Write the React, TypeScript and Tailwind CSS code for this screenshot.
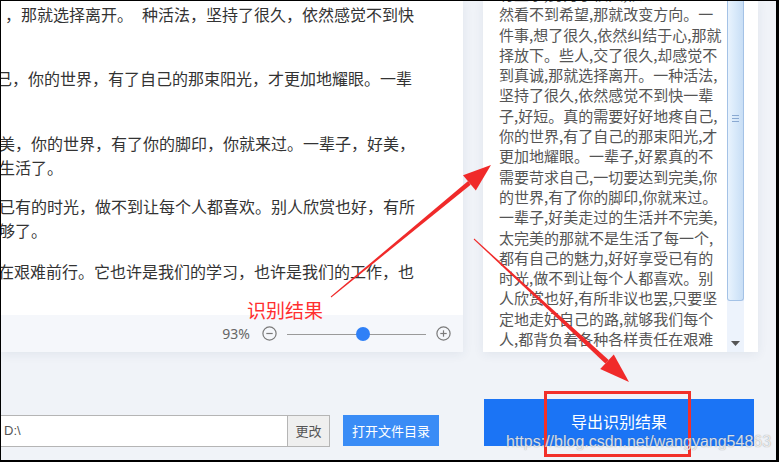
import React from "react";

const leftLines = [
  { text: "己，你的世界，有了自己的那束阳光，才更加地耀眼。一辈", cls: "mt-[40px] -ml-[5px]" },
  { text: "美，你的世界，有了你的脚印，你就来过。一辈子，好美，", cls: "mt-[41px] -ml-[2px]" },
  { text: "生活了。", cls: "-ml-[2px]" },
  { text: "已有的时光，做不到让每个人都喜欢。别人欣赏也好，有所", cls: "mt-[15px] -ml-[2px]" },
  { text: "够了。", cls: "-ml-[2px]" },
  { text: "在艰难前行。它也许是我们的学习，也许是我们的工作，也", cls: "mt-[17px] -ml-[3px]" },
];

const rightLines = [
  "有些事,努力了很久,依",
  "然看不到希望,那就改变方向。一",
  "件事,想了很久,依然纠结于心,那就",
  "择放下。些人,交了很久,却感觉不",
  "到真诚,那就选择离开。一种活法,",
  "坚持了很久,依然感觉不到快一辈",
  "子,好短。真的需要好好地疼自己,",
  "你的世界,有了自己的那束阳光,才",
  "更加地耀眼。一辈子,好累真的不",
  "需要苛求自己,一切要达到完美,你",
  "的世界,有了你的脚印,你就来过。",
  "一辈子,好美走过的生活并不完美,",
  "太完美的那就不是生活了每一个,",
  "都有自己的魅力,好好享受已有的",
  "时光,做不到让每个人都喜欢。别",
  "人欣赏也好,有所非议也罢,只要坚",
  "定地走好自己的路,就够我们每个",
  "人,都背负着各种各样责任在艰难",
];

function CircleIcon({ plus }: { plus?: boolean }) {
  return (
    <svg width="15" height="15" viewBox="0 0 15 15" className="shrink-0">
      <circle cx="7.5" cy="7.5" r="6.6" fill="none" stroke="#7a7a7a" strokeWidth="1.2" />
      <line x1="4.3" y1="7.5" x2="10.7" y2="7.5" stroke="#7a7a7a" strokeWidth="1.2" />
      {plus && <line x1="7.5" y1="4.3" x2="7.5" y2="10.7" stroke="#7a7a7a" strokeWidth="1.2" />}
    </svg>
  );
}

function ZoomBar() {
  return (
    <div className="flex h-[37px] items-center justify-end bg-[#f5f7fb] pr-[12px] font-['Noto_Sans','Noto_Sans_CJK_SC',sans-serif] text-[14px] text-[#666]">
      <span className="mr-[12px]">93%</span>
      <CircleIcon />
      <div className="relative ml-[10px] mr-[10px] h-[14px] w-[139px]">
        <div className="absolute left-0 right-0 top-[7px] h-px bg-[#9a9a9a]" />
        <div className="absolute left-[69px] top-0 h-[14px] w-[14px] rounded-full bg-[#2f80f7]" />
      </div>
      <CircleIcon plus />
    </div>
  );
}

function Scrollbar() {
  return (
    <div className="flex w-[17px] flex-col bg-[#edf3fc]">
      <div className="flex h-[300px] flex-col items-center justify-end rounded-b-[3px] border border-t-0 border-[#a4c2e6] bg-gradient-to-r from-[#e9f3fd] via-[#d8e9fa] to-[#c8def5] pb-[178px]">
        <div className="flex flex-col gap-[2px]">
          <div className="h-px w-[7px] bg-[#8aa9d2]" />
          <div className="h-px w-[7px] bg-[#8aa9d2]" />
          <div className="h-px w-[7px] bg-[#8aa9d2]" />
        </div>
      </div>
      <div className="flex flex-1 items-end justify-center pb-[6px]">
        <svg width="9" height="5" viewBox="0 0 9 5">
          <path d="M0 0 H9 L4.5 5 Z" fill="#555" />
        </svg>
      </div>
    </div>
  );
}

function Arrows() {
  return (
    <svg className="pointer-events-none absolute left-0 top-0" width="779" height="462" viewBox="0 0 779 462">
      <polygon points="329.7,295.6 330.3,296.4 469.7,183.8 467.1,180.0" fill="#f02a2a" />
      <polygon points="490,164 462.0,174.2 474.8,189.6" fill="#f02a2a" />
      <polygon points="473.3,237.6 472.7,238.4 604.3,362.5 607.7,358.9" fill="#f02a2a" />
      <polygon points="628,381 612.8,353.4 599.2,368.1" fill="#f02a2a" />
    </svg>
  );
}

export default function App() {
  return (
    <div className="relative box-border h-[462px] w-[779px] overflow-hidden border-b-2 border-l border-r-[3px] border-t border-black bg-[#f0f3f8] font-['Noto_Sans_CJK_SC',sans-serif]">
      <div className="flex h-[351px]">
        <div className="flex w-[462px] flex-col bg-white shadow-[0_2px_10px_rgba(40,60,100,0.08)]">
          <div className="flex-1 overflow-hidden whitespace-nowrap text-[16px] leading-[24px] text-[#333]">
            <div className="pl-[4px] pt-[1px]">
              <span>，那就选择离开。</span>
              <span className="ml-[9px]">种活法，坚持了很久，依然感觉不到快</span>
            </div>
            {leftLines.map((l, i) => (
              <div key={i} className={l.cls}>
                {l.text}
              </div>
            ))}
          </div>
          <ZoomBar />
        </div>
        <div className="ml-[20px] flex w-[275px] bg-white pr-[14px] shadow-[0_2px_10px_rgba(40,60,100,0.08)]">
          <div className="flex-1 overflow-hidden whitespace-nowrap pl-[16px] text-[15px] leading-[20.3px] text-[#555]">
            <div className="-mt-[17px]">
              {rightLines.map((t, i) => (
                <div key={i}>{t}</div>
              ))}
            </div>
          </div>
          <Scrollbar />
        </div>
      </div>

      <div className="flex h-[106px]">
        <div className="mt-[63px] flex h-[32px] w-[482px] items-start text-[13px]">
          <div className="-ml-px flex h-[32px] w-[288px] items-center border border-[#b5b5b5] bg-white pl-[3px] font-['Liberation_Sans',sans-serif] text-[#555]">
            D:\
          </div>
          <div className="-ml-px flex h-[32px] w-[43px] items-center justify-center border border-[#b5b5b5] bg-[#efefef] text-[#555]">
            更改
          </div>
          <div className="ml-[13px] flex h-[31px] w-[96px] items-center justify-center bg-[#3a8cf6] text-white">
            打开文件目录
          </div>
        </div>
        <div className="ml-[1px] mt-[47px] flex h-[47px] w-[270px] items-center justify-center bg-[#1b74f5] pb-[3px] text-[16px] text-white">
          导出识别结果
        </div>
      </div>

      <Arrows />
      <div className="absolute left-[246px] top-[296px] text-[19px] leading-[26px] text-[#ff2f2f]">识别结果</div>
      <div className="absolute left-[543px] top-[390px] h-[66px] w-[147px] border-[3px] border-[#f2302a]" />
      <div className="absolute left-[505px] top-[431px] font-['Liberation_Sans',sans-serif] text-[16px] leading-[20px] text-white/80 [text-shadow:0_0_1px_rgba(60,60,60,0.6)]">
        https://blog.csdn.net/wangyang54863
      </div>
    </div>
  );
}
